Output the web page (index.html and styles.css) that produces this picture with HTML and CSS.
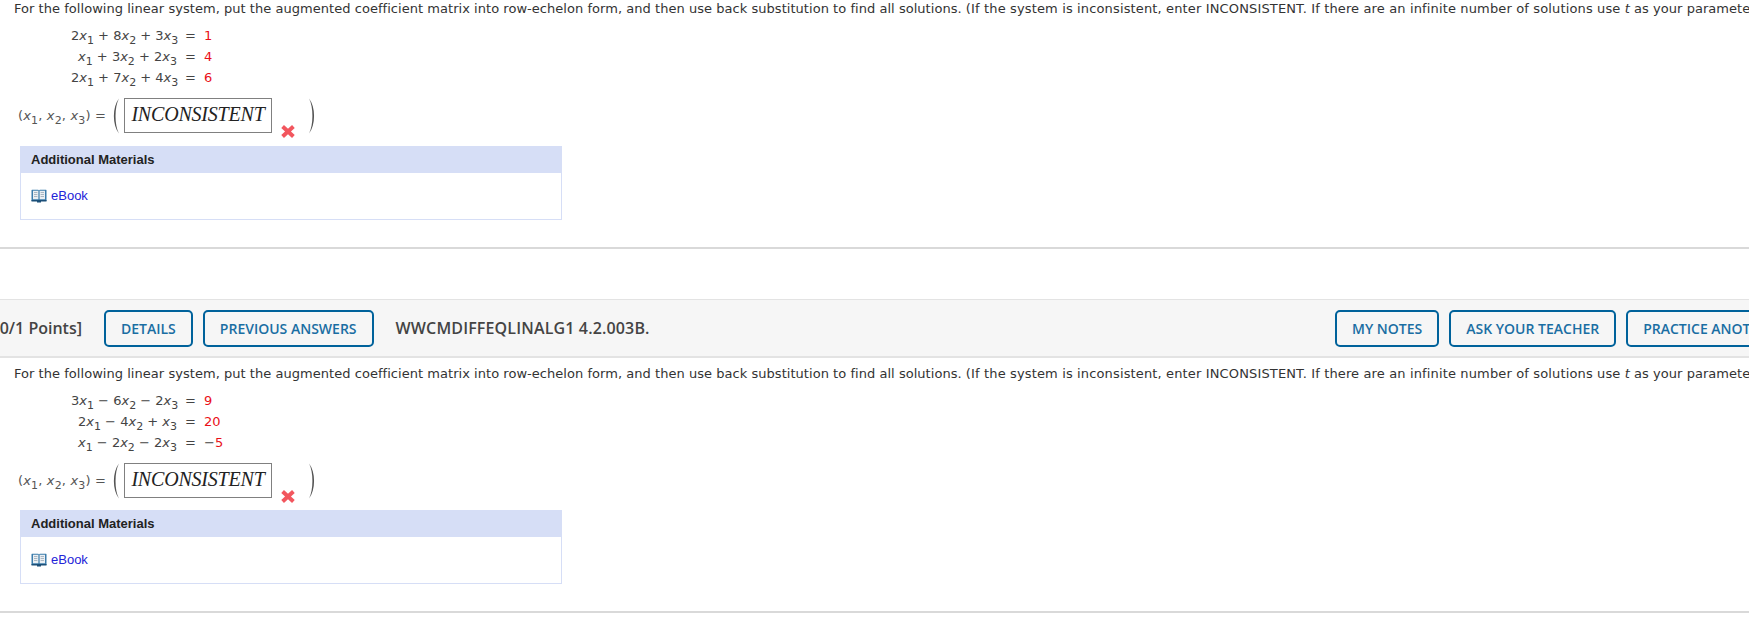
FILE: index.html
```html
<!DOCTYPE html>
<html lang="en">

<head>
    <meta charset="UTF-8">
    <meta name="viewport" content="width=device-width, initial-scale=1.0">
    <title>Linear systems</title>
    <link rel="stylesheet" href="styles.css">
</head>

<body>
    <svg class="defs" width="0" height="0">
        <symbol id="book" viewBox="0 0 16 14">
            <path d="M1 .8h6.2l.8.6.8-.6h6.2q.5 0 .5.5v10.6h-15v-10.6q0-.5.5-.5z" fill="#3b7cab" />
            <path d="M2 1.8h5.4v8.4h-5.4zM8.6 1.8h5.4v8.4h-5.4z" fill="#eaeff3" />
            <path d="M3 3.5h3.4M3 5.5h3.4M3 7.5h3.4M9.6 3.5h3.4M9.6 5.5h3.4M9.6 7.5h3.4" stroke="#aab7c2" />
            <path d="M.5 11h15v1.6h-5.5v.9h-4v-.9h-5.5z" fill="#1b4f78" />
        </symbol>
        <symbol id="cross" viewBox="0 0 14 13">
            <path d="M1.6 1.6l10.8 9.8M12.4 1.6l-10.8 9.8" stroke="#f2565e" stroke-width="4" />
        </symbol>
        <symbol id="paren" viewBox="0 0 9 36">
            <path d="M7 .5C.2 9 .2 27 7 35.5C2.4 27 2.4 9 7 .5z" fill="#555" />
        </symbol>
    </svg>

    <section class="question first">
        <p class="prompt">For the following linear system, put the augmented coefficient matrix into row-echelon form, and then use back substitution to find all solutions. <span class="prompt-note">(If the system is inconsistent, enter INCONSISTENT. If there are an infinite number of solutions use </span><i>t</i> as your parameter.)</p>
        <div class="system">
            <span class="lhs">2<i>x</i><sub>1</sub> + 8<i>x</i><sub>2</sub> + 3<i>x</i><sub>3</sub></span><span class="eq">=</span><span class="rhs">1</span>
            <span class="lhs"><i>x</i><sub>1</sub> + 3<i>x</i><sub>2</sub> + 2<i>x</i><sub>3</sub></span><span class="eq">=</span><span class="rhs">4</span>
            <span class="lhs">2<i>x</i><sub>1</sub> + 7<i>x</i><sub>2</sub> + 4<i>x</i><sub>3</sub></span><span class="eq">=</span><span class="rhs">6</span>
        </div>
        <div class="answer">
            <span class="vars">(<i>x</i><sub>1</sub>, <i>x</i><sub>2</sub>, <i>x</i><sub>3</sub>) =</span>
            <svg class="paren"><use href="#paren" /></svg>
            <span class="box">INCONSISTENT</span>
            <svg class="cross"><use href="#cross" /></svg>
            <svg class="paren close"><use href="#paren" /></svg>
        </div>
        <div class="materials">
            <div class="materials-head">Additional Materials</div>
            <div class="materials-body">
                <svg class="book"><use href="#book" /></svg><a class="ebook">eBook</a>
            </div>
        </div>
    </section>
    <hr class="rule">

    <header class="toolbar">
        <div class="toolbar-left">
            <span class="points"><span>[0/1 Points]</span></span>
            <button class="btn">DETAILS</button>
            <button class="btn">PREVIOUS ANSWERS</button>
            <span class="code">WWCMDIFFEQLINALG1 4.2.003B.</span>
        </div>
        <div class="toolbar-right">
            <button class="btn">MY NOTES</button>
            <button class="btn">ASK YOUR TEACHER</button>
            <button class="btn">PRACTICE ANOTHER</button>
        </div>
    </header>

    <section class="question">
        <p class="prompt">For the following linear system, put the augmented coefficient matrix into row-echelon form, and then use back substitution to find all solutions. <span class="prompt-note">(If the system is inconsistent, enter INCONSISTENT. If there are an infinite number of solutions use </span><i>t</i> as your parameter.)</p>
        <div class="system">
            <span class="lhs">3<i>x</i><sub>1</sub> − 6<i>x</i><sub>2</sub> − 2<i>x</i><sub>3</sub></span><span class="eq">=</span><span class="rhs">9</span>
            <span class="lhs">2<i>x</i><sub>1</sub> − 4<i>x</i><sub>2</sub> + <i>x</i><sub>3</sub></span><span class="eq">=</span><span class="rhs">20</span>
            <span class="lhs"><i>x</i><sub>1</sub> − 2<i>x</i><sub>2</sub> − 2<i>x</i><sub>3</sub></span><span class="eq">=</span><span class="rhs"><span class="minus">−</span>5</span>
        </div>
        <div class="answer">
            <span class="vars">(<i>x</i><sub>1</sub>, <i>x</i><sub>2</sub>, <i>x</i><sub>3</sub>) =</span>
            <svg class="paren"><use href="#paren" /></svg>
            <span class="box">INCONSISTENT</span>
            <svg class="cross"><use href="#cross" /></svg>
            <svg class="paren close"><use href="#paren" /></svg>
        </div>
        <div class="materials">
            <div class="materials-head">Additional Materials</div>
            <div class="materials-body">
                <svg class="book"><use href="#book" /></svg><a class="ebook">eBook</a>
            </div>
        </div>
    </section>
    <hr class="rule">
</body>

</html>
```

FILE: styles.css
```css
html,
body {
    height: 100%;
    overflow: hidden;
}

body {
    margin: 0;
    background: #fff;
    color: #333;
    font: 13px "DejaVu Sans", Verdana, sans-serif;
}

.defs {
    display: block;
    height: 0;
}

.question {
    padding: 7px 0 0 14px;
}

.question.first {
    padding-top: 0;
}

.prompt {
    margin: 0;
    height: 18px;
    line-height: 18px;
    letter-spacing: .04px;
    white-space: nowrap;
}

.prompt-note {
    letter-spacing: .14px;
}

.system {
    display: grid;
    grid-template-columns: 106px 26px auto;
    justify-content: start;
    grid-auto-rows: 21px;
    margin: 7px 0 0 57px;
    line-height: 21px;
    color: #444;
}

.lhs {
    text-align: right;
    white-space: nowrap;
}

.eq {
    padding-left: 8px;
}

.rhs {
    padding-left: 1px;
    color: #ea0f18;
}

.minus {
    color: #444;
}

sub {
    font-size: 11px;
    line-height: 0;
}

.answer {
    display: flex;
    align-items: flex-start;
    margin: 10px 0 0 4px;
    height: 35px;
}

.vars {
    width: 94px;
    line-height: 35px;
    letter-spacing: .15px;
    color: #555;
    white-space: nowrap;
}

.paren {
    flex: none;
    width: 9px;
    height: 36px;
}

.paren.close {
    margin-left: 12px;
    transform: scaleX(-1);
}

.box {
    box-sizing: border-box;
    width: 148px;
    height: 35px;
    margin-left: 3px;
    border: 1px solid #808080;
    text-align: center;
    color: #222;
    font: italic 20px/31px "Liberation Serif", serif;
    letter-spacing: -.2px;
}

.cross {
    flex: none;
    width: 14px;
    height: 13px;
    margin: 27px 0 0 9px;
}

.materials {
    box-sizing: border-box;
    width: 542px;
    height: 74px;
    margin: 12px 0 0 6px;
    border: 1px solid #d6def6;
    font: 13px "Liberation Sans", Arial, sans-serif;
}

.first .materials {
    margin-top: 13px;
}

.materials-head {
    margin: -1px -1px 0;
    height: 27px;
    padding-left: 11px;
    background: #d6def6;
    line-height: 27px;
    font-weight: bold;
    color: #222;
}

.materials-body {
    display: flex;
    align-items: center;
    gap: 4px;
    padding: 15px 0 0 10px;
}

.book {
    width: 16px;
    height: 14px;
}

.ebook {
    color: #2323d8;
}

.rule {
    margin: 27px 0 0;
    border: 0;
    border-top: 2px solid #d9d9d9;
}

.toolbar {
    display: flex;
    align-items: center;
    box-sizing: border-box;
    height: 59px;
    margin-top: 50px;
    border-top: 1px solid #e3e3e3;
    border-bottom: 2px solid #e3e3e3;
    background: #f6f6f6;
    font-family: "Open Sans", sans-serif;
}

.toolbar-left {
    display: flex;
    align-items: center;
    flex: 0 0 1335px;
}

.toolbar-right {
    display: flex;
    gap: 10px;
    flex: none;
}

.points {
    display: flex;
    justify-content: flex-end;
    width: 82px;
    margin-right: 22px;
    overflow: hidden;
    white-space: nowrap;
    font-size: 16px;
    font-weight: 600;
    color: #444;
}

.btn {
    box-sizing: border-box;
    height: 37px;
    margin: 0;
    padding: 0 15px;
    border: 2px solid #00629b;
    border-radius: 5px;
    background: #fff0;
    color: #1a6ea3;
    font: 600 14px "Open Sans", sans-serif;
    white-space: nowrap;
}

.toolbar-left .btn + .btn {
    margin-left: 10px;
}

.code {
    margin-left: 22px;
    font-size: 16px;
    font-weight: 600;
    letter-spacing: .15px;
    color: #444;
}
```
